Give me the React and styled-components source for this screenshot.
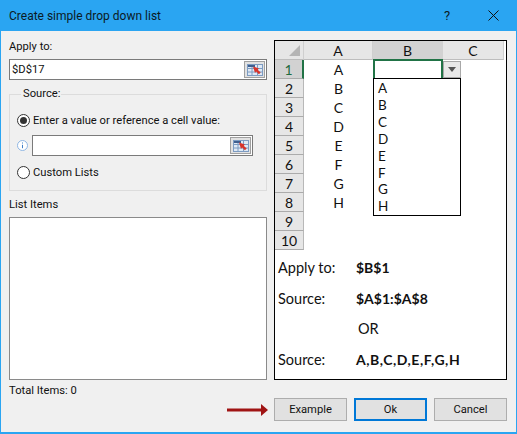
import React from 'react';
import styled, { createGlobalStyle, css } from 'styled-components';

const Global = createGlobalStyle`
  html, body { margin: 0; padding: 0; background: #f0f0f0; }
  * { box-sizing: border-box; }
  body { font-family: Roboto, "Noto Sans", sans-serif; font-size: 11.2px; color: #111; }
`;

const Window = styled.div`
  width: 517px;
  height: 434px;
  background: #f0f0f0;
  border: 1px solid #2aa5f2;
  border-top: 0;
  border-bottom-width: 2px;
  display: flex;
  flex-direction: column;
  position: relative;
  overflow: hidden;
`;

const TitleBar = styled.div`
  height: 31px;
  flex: none;
  background: #2aa5f2;
  display: flex;
  align-items: center;
  padding-left: 8px;
  font-size: 12px;
  color: #0c1a24;
`;

const TitleText = styled.span`
  flex: 1;
`;

const TitleIcon = styled.div`
  width: 46px;
  height: 31px;
  display: flex;
  align-items: center;
  justify-content: center;
  font-size: 13px;
`;

const Body = styled.div`
  flex: 1;
  display: flex;
  gap: 7px;
  padding: 7px 9px 0 8px;
`;

const LeftCol = styled.div`
  width: 258px;
  display: flex;
  flex-direction: column;
`;

const Label = styled.div`
  height: 21px;
  line-height: 17px;
`;

const ListLabel = styled(Label)`
  margin-top: 5px;
`;

const Field = styled.div`
  height: 21px;
  background: #fff;
  border: 1px solid #7a7a7a;
  display: flex;
  align-items: center;
  justify-content: space-between;
  padding: 0 1px 0 2px;
  flex: ${p => (p.$grow ? 1 : 'none')};
`;

const RefButton = styled.div`
  width: 21px;
  height: 17px;
  border: 1px solid #a0a0a0;
  background: #e2e2e2;
  display: flex;
  align-items: center;
  justify-content: center;
`;

const RefIcon = () => (
  <RefButton>
    <svg width="16" height="12" viewBox="0 0 16 12">
      <rect x="0.5" y="0.5" width="15" height="11" fill="#dfe9f5" stroke="#7d9cc2" />
      <path d="M0 4.5H16M0 8H16M5 0V12M10.5 0V12" stroke="#7d9cc2" />
      <rect x="1" y="1" width="7" height="2" fill="#3f5f8f" />
      <path d="M6 2.5l6 2-1.3 1.3 3 2.7-1.8 1.8-2.8-2.8L8 9z" fill="#d8342b" />
    </svg>
  </RefButton>
);

const Group = styled.fieldset`
  margin: 7px 0 0;
  padding: 9px 13px 0 7px;
  height: 104px;
  border: 1px solid #dcdcdc;
  display: flex;
  flex-direction: column;
  legend {
    padding: 0 1px 0 2px;
    margin-left: 4px;
    line-height: 14px;
  }
`;

const RadioRow = styled.div`
  display: flex;
  align-items: center;
  gap: 3px;
  height: 20px;
  flex: none;
`;

const Radio = styled.span`
  width: 13px;
  height: 13px;
  border-radius: 50%;
  border: 1px solid #333;
  background: #fff;
  flex: none;
  display: flex;
  align-items: center;
  justify-content: center;
  ${p => p.$checked && css`
    &::after {
      content: '';
      width: 7px;
      height: 7px;
      border-radius: 50%;
      background: #333;
    }
  `}
`;

const InputRow = styled.div`
  display: flex;
  align-items: center;
  gap: 4px;
  margin: 5px 0 6px;
  flex: none;
`;

const ListBox = styled.div`
  height: 163px;
  flex: none;
  background: #fff;
  border: 1px solid #8a8a8a;
`;

const Total = styled.div`
  margin-top: 2px;
  height: 18px;
  line-height: 18px;
`;

const Panel = styled.div`
  width: 233px;
  height: 340px;
  margin-top: 2px;
  background: #fff;
  border: 1px solid #000;
  position: relative;
`;

const Sheet = styled.div`
  display: grid;
  grid-template-columns: 29px 69px 70px 61px;
  grid-auto-rows: 19px;
  font-family: Lato, "Open Sans", sans-serif;
  font-size: 14px;
  line-height: 19px;
  position: relative;
`;

const Cell = styled.div`
  text-align: center;
  height: 19px;
`;

const ColHead = styled(Cell)`
  background: ${p => (p.$active ? '#d2d2d2' : '#e6e6e6')};
  border-bottom: 1px solid #bdbdbd;
  border-right: 1px solid ${p => (p.$active ? '#d2d2d2' : '#cfcfcf')};
`;

const Corner = styled(ColHead)`
  display: flex;
  align-items: center;
  justify-content: flex-end;
  padding-right: 3px;
`;

const RowHead = styled(Cell)`
  background: ${p => (p.$active ? '#d2d2d2' : '#e6e6e6')};
  border-bottom: 1px solid #ababab;
  border-right: ${p => (p.$active ? '2px solid #217346' : '1px solid #b8b8b8')};
  ${p => p.$active && css`color: #1d6b40;`}
`;

const ActiveCell = styled(Cell)`
  border: 2px solid #217346;
  margin-top: -1px;
  height: 21px;
`;

const DropArrow = styled.div`
  position: absolute;
  left: 168px;
  top: 20px;
  width: 18px;
  height: 17px;
  background: #e8e8e8;
  border: 1px solid #a8a8a8;
  display: flex;
  align-items: center;
  justify-content: center;
  &::after {
    content: '';
    border-left: 4px solid transparent;
    border-right: 4px solid transparent;
    border-top: 5px solid #555;
  }
`;

const DropList = styled.div`
  position: absolute;
  left: 98px;
  top: 37px;
  width: 88px;
  height: 138px;
  background: #fff;
  border: 1px solid #000;
  padding: 1px 0 0 4px;
  font-size: 13.5px;
  line-height: 16.9px;
  z-index: 1;
`;

const Notes = styled.div`
  display: flex;
  flex-direction: column;
  padding: 7px 0 0 3px;
  font-family: Lato, "Open Sans", sans-serif;
  font-size: 14.5px;
`;

const Note = styled.div`
  display: grid;
  grid-template-columns: 78px 1fr;
  height: 30.5px;
  line-height: 22px;
  b {
    font-size: 14px;
    font-weight: 700;
    letter-spacing: ${p => (p.$wide ? '0.5px' : '0')};
  }
`;

const Or = styled.span`
  padding-left: 2px;
`;

const Footer = styled.div`
  position: absolute;
  right: 9px;
  top: 398px;
  display: flex;
  gap: 7px;
  align-items: center;
`;

const Button = styled.div`
  width: 73px;
  height: 23px;
  background: #e1e1e1;
  border: ${p => (p.$primary ? '2px solid #0078d7' : '1px solid #adadad')};
  display: flex;
  align-items: center;
  justify-content: center;
`;

const Arrow = styled.svg`
  margin-right: -1px;
`;

const rows = ['A', 'B', 'C', 'D', 'E', 'F', 'G', 'H', '', ''];

export default function App() {
  return (
    <>
      <Global />
      <Window>
        <TitleBar>
          <TitleText>Create simple drop down list</TitleText>
          <TitleIcon>?</TitleIcon>
          <TitleIcon>
            <svg width="11" height="11" viewBox="0 0 11 11">
              <path d="M0.5 0.5L10.5 10.5M10.5 0.5L0.5 10.5" stroke="#111" strokeWidth="1" />
            </svg>
          </TitleIcon>
        </TitleBar>
        <Body>
          <LeftCol>
            <Label>Apply to:</Label>
            <Field>
              $D$17
              <RefIcon />
            </Field>
            <Group>
              <legend>Source:</legend>
              <RadioRow>
                <Radio $checked />
                Enter a value or reference a cell value:
              </RadioRow>
              <InputRow>
                <svg width="11" height="11" viewBox="0 0 11 11">
                  <circle cx="5.5" cy="5.5" r="5" fill="#fff" stroke="#8fb6e3" />
                  <path d="M5.5 2.5v1M5.5 4.8v3.4" stroke="#3f7fc8" />
                </svg>
                <Field $grow>
                  <span />
                  <RefIcon />
                </Field>
              </InputRow>
              <RadioRow>
                <Radio />
                Custom Lists
              </RadioRow>
            </Group>
            <ListLabel>List Items</ListLabel>
            <ListBox />
            <Total>Total Items: 0</Total>
          </LeftCol>
          <Panel>
            <Sheet>
              <Corner>
                <svg width="11" height="11" viewBox="0 0 11 11">
                  <path d="M11 0V11H0z" fill="#b5b5b5" />
                </svg>
              </Corner>
              <ColHead>A</ColHead>
              <ColHead $active>B</ColHead>
              <ColHead>C</ColHead>
              {rows.map((v, i) => (
                <React.Fragment key={i}>
                  <RowHead $active={i === 0}>{i + 1}</RowHead>
                  <Cell>{v}</Cell>
                  {i === 0 ? <ActiveCell /> : <Cell />}
                  <Cell />
                </React.Fragment>
              ))}
              <DropArrow />
              <DropList>
                {rows.slice(0, 8).map(v => <div key={v}>{v}</div>)}
              </DropList>
            </Sheet>
            <Notes>
              <Note><span>Apply to:</span><b>$B$1</b></Note>
              <Note><span>Source:</span><b>$A$1:$A$8</b></Note>
              <Note><span /><Or>OR</Or></Note>
              <Note $wide><span>Source:</span><b>A,B,C,D,E,F,G,H</b></Note>
            </Notes>
          </Panel>
        </Body>
        <Footer>
          <Arrow width="41" height="12" viewBox="0 0 41 12">
            <path d="M0 6H34" stroke="#a01414" strokeWidth="3" />
            <path d="M34 0L41 6L34 12z" fill="#a01414" />
          </Arrow>
          <Button>Example</Button>
          <Button $primary>Ok</Button>
          <Button>Cancel</Button>
        </Footer>
      </Window>
    </>
  );
}
